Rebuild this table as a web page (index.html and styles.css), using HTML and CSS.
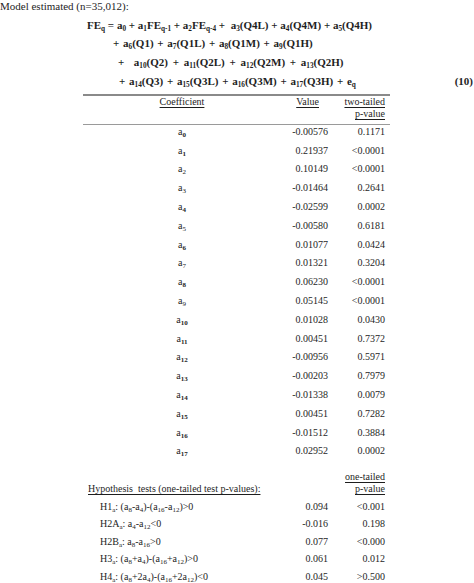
FILE: index.html
```html
<!DOCTYPE html>
<html>
<head>
<meta charset="utf-8">
<link rel="stylesheet" href="styles.css">
</head>
<body>
<div class="page">
  <p class="intro">Model estimated (n=35,012):</p>
  <div class="equation">
    <div class="eq-line l1">FE<sub>q</sub> = a<sub>0</sub> + a<sub>1</sub>FE<sub>q-1</sub> + a<sub>2</sub>FE<sub>q-4</sub> + &nbsp;a<sub>3</sub>(Q4L) + a<sub>4</sub>(Q4M) + a<sub>5</sub>(Q4H)</div>
    <div class="eq-line l2">+ a<sub>6</sub>(Q1) + a<sub>7</sub>(Q1L) + a<sub>8</sub>(Q1M) + a<sub>9</sub>(Q1H)</div>
    <div class="eq-line l3">+ &nbsp;a<sub>10</sub>(Q2) + a<sub>11</sub>(Q2L) + a<sub>12</sub>(Q2M) + a<sub>13</sub>(Q2H)</div>
    <div class="eq-line l4"><span>+ a<sub>14</sub>(Q3) + a<sub>15</sub>(Q3L) + a<sub>16</sub>(Q3M) + a<sub>17</sub>(Q3H) + e<sub>q</sub></span><span class="eq-num">(10)</span></div>
  </div>

  <div class="table">
    <div class="row thead">
      <div class="c-coef center"><span class="ul">Coefficient</span></div>
      <div class="c-val val-head"><span class="ul">Value</span></div>
      <div class="c-p"><span class="ul">two-tailed<br>p-value</span></div>
    </div>
    <div class="tbody">
      <div class="row trow"><div class="c-coef center">a<sub class="b">0</sub></div><div class="c-val">-0.00576</div><div class="c-p">0.1171</div></div>
      <div class="row trow"><div class="c-coef center">a<sub class="b">1</sub></div><div class="c-val">0.21937</div><div class="c-p">&lt;0.0001</div></div>
      <div class="row trow"><div class="c-coef center">a<sub>2</sub></div><div class="c-val">0.10149</div><div class="c-p">&lt;0.0001</div></div>
      <div class="row trow"><div class="c-coef center">a<sub>3</sub></div><div class="c-val">-0.01464</div><div class="c-p">0.2641</div></div>
      <div class="row trow"><div class="c-coef center">a<sub class="b">4</sub></div><div class="c-val">-0.02599</div><div class="c-p">0.0002</div></div>
      <div class="row trow"><div class="c-coef center">a<sub>5</sub></div><div class="c-val">-0.00580</div><div class="c-p">0.6181</div></div>
      <div class="row trow"><div class="c-coef center">a<sub class="b">6</sub></div><div class="c-val">0.01077</div><div class="c-p">0.0424</div></div>
      <div class="row trow"><div class="c-coef center">a<sub>7</sub></div><div class="c-val">0.01321</div><div class="c-p">0.3204</div></div>
      <div class="row trow"><div class="c-coef center">a<sub class="b">8</sub></div><div class="c-val">0.06230</div><div class="c-p">&lt;0.0001</div></div>
      <div class="row trow"><div class="c-coef center">a<sub>9</sub></div><div class="c-val">0.05145</div><div class="c-p">&lt;0.0001</div></div>
      <div class="row trow"><div class="c-coef center">a<sub class="b">10</sub></div><div class="c-val">0.01028</div><div class="c-p">0.0430</div></div>
      <div class="row trow"><div class="c-coef center">a<sub class="b">11</sub></div><div class="c-val">0.00451</div><div class="c-p">0.7372</div></div>
      <div class="row trow"><div class="c-coef center">a<sub class="b">12</sub></div><div class="c-val">-0.00956</div><div class="c-p">0.5971</div></div>
      <div class="row trow"><div class="c-coef center">a<sub class="b">13</sub></div><div class="c-val">-0.00203</div><div class="c-p">0.7979</div></div>
      <div class="row trow"><div class="c-coef center">a<sub class="b">14</sub></div><div class="c-val">-0.01338</div><div class="c-p">0.0079</div></div>
      <div class="row trow"><div class="c-coef center">a<sub class="b">15</sub></div><div class="c-val">0.00451</div><div class="c-p">0.7282</div></div>
      <div class="row trow"><div class="c-coef center">a<sub class="b">16</sub></div><div class="c-val">-0.01512</div><div class="c-p">0.3884</div></div>
      <div class="row trow"><div class="c-coef center">a<sub class="b">17</sub></div><div class="c-val">0.02952</div><div class="c-p">0.0002</div></div>
    </div>

    <div class="row hhead">
      <div class="c-coef hyp-title"><span class="ul">Hypothesis &nbsp;tests (one-tailed test p-values):</span></div>
      <div class="c-val"></div>
      <div class="c-p"><span class="ul">one-tailed<br>p-value</span></div>
    </div>
    <div class="hbody">
      <div class="row hrow"><div class="c-coef hyp">H1<sub>a</sub>: (a<sub>8</sub>-a<sub>4</sub>)-(a<sub>16</sub>-a<sub>12</sub>)&gt;0</div><div class="c-val">0.094</div><div class="c-p">&lt;0.001</div></div>
      <div class="row hrow"><div class="c-coef hyp">H2A<sub>a</sub>: a<sub>4</sub>-a<sub>12</sub>&lt;0</div><div class="c-val">-0.016</div><div class="c-p">0.198</div></div>
      <div class="row hrow"><div class="c-coef hyp">H2B<sub>a</sub>: a<sub>8</sub>-a<sub>16</sub>&gt;0</div><div class="c-val">0.077</div><div class="c-p">&lt;0.000</div></div>
      <div class="row hrow"><div class="c-coef hyp">H3<sub>a</sub>: (a<sub>8</sub>+a<sub>4</sub>)-(a<sub>16</sub>+a<sub>12</sub>)&gt;0</div><div class="c-val">0.061</div><div class="c-p">0.012</div></div>
      <div class="row hrow"><div class="c-coef hyp">H4<sub>a</sub>: (a<sub>8</sub>+2a<sub>4</sub>)-(a<sub>16</sub>+2a<sub>12</sub>)&lt;0</div><div class="c-val">0.045</div><div class="c-p">&gt;0.500</div></div>
    </div>
  </div>
</div>
</body>
</html>
```

FILE: styles.css
```css
html {
  overflow: hidden;
}
body {
  margin: 0;
  background: #ffffff;
  color: #1e1e1e;
  font-family: "Liberation Serif", "Times New Roman", serif;
}
.page {
  width: 474px;
  height: 583px;
  overflow: hidden;
}
.intro {
  margin: 0;
  font-size: 11px;
  line-height: 13px;
  padding-left: 0;
}
.equation {
  margin-top: 2.6px;
  font-weight: bold;
  font-size: 11px;
}
.eq-line {
  line-height: 18.8px;
  white-space: nowrap;
}
.equation sub {
  font-size: 0.66em;
  line-height: 0;
  vertical-align: -0.25em;
}
.l1 { padding-left: 87px; }
.l2 { padding-left: 113px; word-spacing: 1px; }
.l3 { padding-left: 118px; word-spacing: 2px; }
.l4 {
  padding-left: 119px;
  display: flex;
  justify-content: space-between;
  word-spacing: 1px;
}
.eq-num {
  padding-right: 1px;
}
.table {
  margin-top: 3px;
  margin-left: 83px;
  width: 307px;
  font-size: 10px;
}
.row {
  display: grid;
  grid-template-columns: 198px 47px 57px 5px;
}
.thead {
  border-top: 2px solid #8a8a8a;
  border-bottom: 1px solid #9a9a9a;
  line-height: 12px;
  padding-bottom: 4px;
}
.c-val, .c-p {
  text-align: right;
  white-space: nowrap;
}
.center {
  text-align: center;
}
.val-head {
  padding-right: 9px;
}
.ul {
  text-decoration: underline;
  text-decoration-thickness: 1px;
  text-underline-offset: 1.5px;
}
.trow {
  height: 18.8px;
  line-height: 14px;
}
.table sub {
  font-size: 0.7em;
  line-height: 0;
  vertical-align: -0.3em;
}
.table sub.b {
  font-weight: bold;
}
.hhead {
  margin-top: 7.6px;
  line-height: 12px;
}
.hyp-title {
  align-self: end;
  padding-left: 5px;
  white-space: nowrap;
}
.hbody {
  margin-top: 3.2px;
}
.hrow {
  height: 17.5px;
  line-height: 17.5px;
}
.hyp {
  padding-left: 17px;
  white-space: nowrap;
}
```
